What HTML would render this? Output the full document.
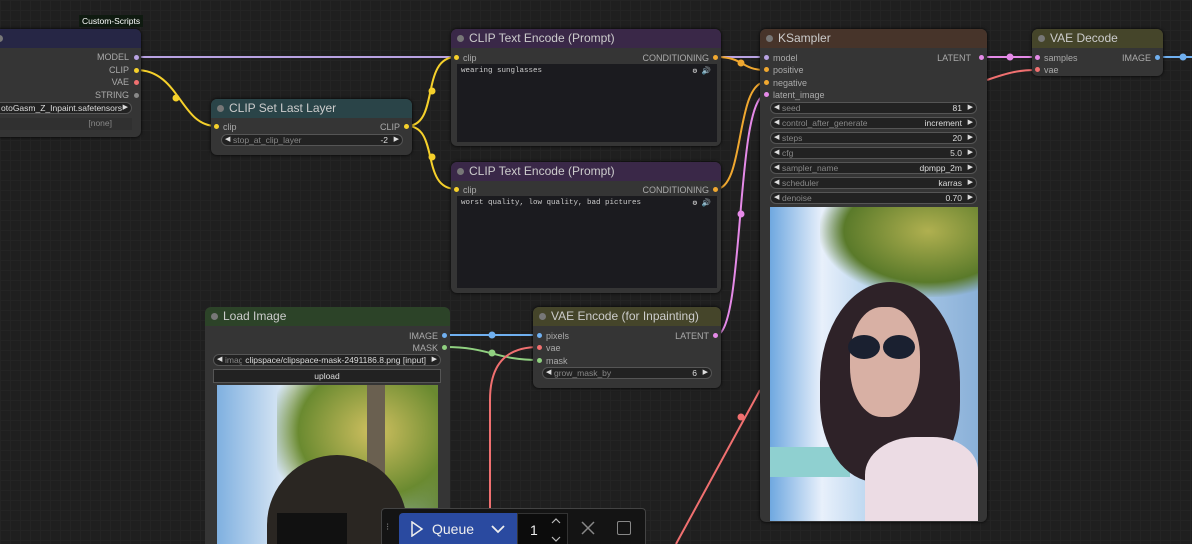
<!DOCTYPE html>
<html style="width:1192px;height:544px;overflow:hidden"><head><meta charset="utf-8"><style>
*{box-sizing:border-box;margin:0;padding:0}
body{width:1192px;height:544px;overflow:hidden;background:#1f1f1f;font-family:"Liberation Sans",sans-serif;position:relative;
background-image:linear-gradient(#242424 1px,transparent 1px),linear-gradient(90deg,#242424 1px,transparent 1px);background-size:10px 10px}
.n{position:absolute;background:#353535;border-radius:6px;box-shadow:0 0 3px #000;}
.t{height:19px;border-radius:6px 6px 0 0;color:#ccc;font-size:12px;line-height:19px;padding-left:18px;position:relative}
.t:before{content:"";position:absolute;left:6px;top:6px;width:7px;height:7px;border-radius:50%;background:#777}
.s{position:absolute;font-size:9px;color:#aaa;line-height:10px}
.d{position:absolute;width:5px;height:5px;border-radius:50%}
.w{position:absolute;height:12px;border-radius:6px;background:#222;border:1px solid #555;font-size:8.5px;color:#888;line-height:10px;padding:0 14px 0 11px;white-space:nowrap;overflow:hidden}
.w:before{content:"◀";position:absolute;left:3px;top:0;color:#ddd;font-size:7px}
.w:after{content:"▶";position:absolute;right:3px;top:0;color:#ddd;font-size:7px}
.w b{position:absolute;right:14px;top:0;color:#ddd;font-weight:normal;background:#222;padding-left:3px}
.ta{position:absolute;background:#1b1b1f;font-family:"Liberation Mono",monospace;font-size:7.5px;color:#ccc;padding:3px 4px}
</style></head><body>
<svg width="1192" height="544" style="position:absolute;left:0;top:0;display:block" fill="none" stroke-width="2">
<path d="M136 57 L760 57" stroke="#b9a3e3"/>
<path d="M136 70 C180 70 180 126 216 126" stroke="#f5d02b"/><circle cx="176" cy="98" r="3.5" fill="#f5d02b"/>
<path d="M407 126 C440 126 420 57 456 57" stroke="#f5d02b"/><circle cx="432" cy="91" r="3.5" fill="#f5d02b"/>
<path d="M407 126 C440 126 420 189 456 189" stroke="#f5d02b"/><circle cx="432" cy="157" r="3.5" fill="#f5d02b"/>
<path d="M716 57 C745 57 740 70 766 70" stroke="#f0a830"/><circle cx="741" cy="63" r="3.5" fill="#f0a830"/>
<path d="M716 189 C745 189 735 82 766 82" stroke="#f0a830"/>
<path d="M716 335 C745 335 735 95 766 95" stroke="#e58ae8"/><circle cx="741" cy="214" r="3.5" fill="#e58ae8"/>
<path d="M982 57 L1037 57" stroke="#e58ae8"/><circle cx="1010" cy="57" r="3.5" fill="#e58ae8"/>
<path d="M987 80 C1010 72 1020 70 1037 70" stroke="#f07070"/>
<path d="M1158 57 L1192 57" stroke="#70b0f0"/><circle cx="1183" cy="57" r="3.5" fill="#70b0f0"/>
<path d="M445 335 L539 335" stroke="#70b0f0"/><circle cx="492" cy="335" r="3.5" fill="#70b0f0"/>
<path d="M445 347 C490 347 495 360 539 360" stroke="#90d080"/><circle cx="492" cy="353" r="3.5" fill="#90d080"/>
<path d="M490 544 L490 400 C490 360 510 347 539 347" stroke="#f07070"/>
<path d="M676 544 L760 390" stroke="#f07070"/><circle cx="741" cy="417" r="3.5" fill="#f07070"/>
</svg>
<div style="position:absolute;left:79px;top:15px;background:#0f1a10;color:#fff;font-size:8.5px;padding:1px 3px">Custom-Scripts</div>
<div class="n" style="left:-10px;top:29px;width:151px;height:108px">
<div class="t" style="background:#262645"></div>
<div class="s" style="right:12px;top:23px">MODEL</div><div class="d" style="right:2px;top:26px;background:#b9a3e3"></div>
<div class="s" style="right:12px;top:36px">CLIP</div><div class="d" style="right:2px;top:39px;background:#f5d02b"></div>
<div class="s" style="right:12px;top:48px">VAE</div><div class="d" style="right:2px;top:51px;background:#f07070"></div>
<div class="s" style="right:12px;top:61px">STRING</div><div class="d" style="right:2px;top:64px;background:#888"></div>
<div class="w" style="left:0;top:73px;width:142px;color:#ddd;padding-left:10px">otoGasm_Z_Inpaint.safetensors</div>
<div style="position:absolute;left:0;top:89px;width:142px;height:12px;background:#303030;color:#888;font-size:8.5px;text-align:right;padding-right:20px">[none]</div>
</div>
<div class="n" style="left:211px;top:99px;width:201px;height:56px">
<div class="t" style="background:#2a4448">CLIP Set Last Layer</div>
<div class="d" style="left:3px;top:25px;background:#f5d02b"></div><div class="s" style="left:12px;top:23px">clip</div>
<div class="s" style="right:12px;top:23px">CLIP</div><div class="d" style="right:3px;top:25px;background:#f5d02b"></div>
<div class="w" style="left:10px;top:35px;width:182px">stop_at_clip_layer<b>-2</b></div>
</div>
<div class="n" style="left:451px;top:29px;width:270px;height:117px">
<div class="t" style="background:#3a2848">CLIP Text Encode (Prompt)</div>
<div class="d" style="left:3px;top:26px;background:#f5d02b"></div><div class="s" style="left:12px;top:24px">clip</div>
<div class="s" style="right:12px;top:24px">CONDITIONING</div><div class="d" style="right:3px;top:26px;background:#f0a830"></div>
<div class="ta" style="left:6px;top:35px;width:260px;height:78px">wearing sunglasses<span style="position:absolute;right:6px;top:2px;color:#ddd">⚙ 🔊</span></div>
</div>
<div class="n" style="left:451px;top:162px;width:270px;height:131px">
<div class="t" style="background:#3a2848">CLIP Text Encode (Prompt)</div>
<div class="d" style="left:3px;top:25px;background:#f5d02b"></div><div class="s" style="left:12px;top:23px">clip</div>
<div class="s" style="right:12px;top:23px">CONDITIONING</div><div class="d" style="right:3px;top:25px;background:#f0a830"></div>
<div class="ta" style="left:6px;top:34px;width:260px;height:92px">worst quality, low quality, bad pictures<span style="position:absolute;right:6px;top:2px;color:#ddd">⚙ 🔊</span></div>
</div>
<div class="n" style="left:760px;top:29px;width:227px;height:493px">
<div class="t" style="background:#47342a">KSampler</div>
<div class="d" style="left:4px;top:26px;background:#b9a3e3"></div><div class="s" style="left:13px;top:24px">model</div>
<div class="d" style="left:4px;top:38px;background:#f0a830"></div><div class="s" style="left:13px;top:36px">positive</div>
<div class="d" style="left:4px;top:51px;background:#f0a830"></div><div class="s" style="left:13px;top:49px">negative</div>
<div class="d" style="left:4px;top:63px;background:#e58ae8"></div><div class="s" style="left:13px;top:61px">latent_image</div>
<div class="s" style="right:16px;top:24px">LATENT</div><div class="d" style="right:3px;top:26px;background:#e58ae8"></div>
<div class="w" style="left:10px;top:73px;width:207px">seed<b>81</b></div>
<div class="w" style="left:10px;top:88px;width:207px">control_after_generate<b>increment</b></div>
<div class="w" style="left:10px;top:103px;width:207px">steps<b>20</b></div>
<div class="w" style="left:10px;top:118px;width:207px">cfg<b>5.0</b></div>
<div class="w" style="left:10px;top:133px;width:207px">sampler_name<b>dpmpp_2m</b></div>
<div class="w" style="left:10px;top:148px;width:207px">scheduler<b>karras</b></div>
<div class="w" style="left:10px;top:163px;width:207px">denoise<b>0.70</b></div>
<div style="position:absolute;left:10px;top:178px;width:208px;height:314px;overflow:hidden;background:linear-gradient(90deg,#6fa8e0 0%,#e8f0fb 25%,#b8d4ee 50%,#8ab0d8 100%)">
<div style="position:absolute;left:50px;top:-20px;width:180px;height:110px;background:radial-gradient(ellipse at 60% 40%,#b0b050,#5a7a2a 55%,transparent 72%)"></div>
<div style="position:absolute;left:0;top:240px;width:80px;height:30px;background:#8fd0d0"></div>
<div style="position:absolute;left:50px;top:75px;width:140px;height:200px;border-radius:50% 50% 40% 40%;background:#2e2228"></div>
<div style="position:absolute;left:80px;top:100px;width:70px;height:110px;border-radius:45%;background:#d8b0a4"></div>
<div style="position:absolute;left:78px;top:128px;width:32px;height:24px;border-radius:50%;background:#1a2030"></div>
<div style="position:absolute;left:113px;top:128px;width:32px;height:24px;border-radius:50%;background:#1a2030"></div>
<div style="position:absolute;left:95px;top:230px;width:113px;height:84px;border-radius:45% 40% 0 0;background:#ecdce4"></div>
</div>
</div>
<div class="n" style="left:1032px;top:29px;width:131px;height:47px">
<div class="t" style="background:#45452a">VAE Decode</div>
<div class="d" style="left:3px;top:26px;background:#e58ae8"></div><div class="s" style="left:12px;top:24px">samples</div>
<div class="d" style="left:3px;top:38px;background:#f07070"></div><div class="s" style="left:12px;top:36px">vae</div>
<div class="s" style="right:12px;top:24px">IMAGE</div><div class="d" style="right:3px;top:26px;background:#70b0f0"></div>
</div>
<div class="n" style="left:205px;top:307px;width:245px;height:237px;border-radius:6px 6px 0 0;overflow:hidden;box-shadow:none">
<div class="t" style="background:#2c4328">Load Image</div>
<div class="s" style="right:12px;top:24px">IMAGE</div><div class="d" style="right:3px;top:26px;background:#70b0f0"></div>
<div class="s" style="right:12px;top:36px">MASK</div><div class="d" style="right:3px;top:38px;background:#90d080"></div>
<div class="w" style="left:8px;top:47px;width:228px">image<b>clipspace/clipspace-mask-2491186.8.png [input]</b></div>
<div style="position:absolute;left:8px;top:62px;width:228px;height:14px;background:#222;border:1px solid #555;color:#ddd;font-size:8.5px;text-align:center;line-height:12px">upload</div>
<div style="position:absolute;left:12px;top:78px;width:221px;height:159px;overflow:hidden;background:linear-gradient(90deg,#7fb0e0,#e8f0f8 35%,#a8c8e0 60%,#6a8a40)">
<div style="position:absolute;left:60px;top:-10px;width:161px;height:140px;background:radial-gradient(ellipse at 60% 40%,#d0c060,#6a8a30 55%,transparent 78%)"></div>
<div style="position:absolute;left:150px;top:0;width:18px;height:159px;background:#6a6050"></div>
<div style="position:absolute;left:50px;top:70px;width:140px;height:89px;border-radius:70px 70px 0 0;background:#2a2622"></div>
<div style="position:absolute;left:60px;top:128px;width:70px;height:31px;background:#111"></div>
</div>
</div>
<div class="n" style="left:533px;top:307px;width:188px;height:81px">
<div class="t" style="background:#45452a">VAE Encode (for Inpainting)</div>
<div class="d" style="left:4px;top:26px;background:#70b0f0"></div><div class="s" style="left:13px;top:24px">pixels</div>
<div class="d" style="left:4px;top:38px;background:#f07070"></div><div class="s" style="left:13px;top:36px">vae</div>
<div class="d" style="left:4px;top:51px;background:#90d080"></div><div class="s" style="left:13px;top:49px">mask</div>
<div class="s" style="right:12px;top:24px">LATENT</div><div class="d" style="right:3px;top:26px;background:#e58ae8"></div>
<div class="w" style="left:9px;top:60px;width:170px">grow_mask_by<b>6</b></div>
</div>
<div style="position:absolute;left:381px;top:508px;width:265px;height:36px;background:#141414;border:1px solid #444;border-bottom:none;border-radius:4px 4px 0 0;overflow:hidden">
<div style="position:absolute;left:4px;top:14px;color:#777;font-size:10px;line-height:10px">⁝</div>
<div style="position:absolute;left:17px;top:4px;width:118px;height:32px;background:#2a4aa0;border-radius:4px 0 0 0;color:#eee;font-size:14px;line-height:16px">
<svg width="14" height="16" style="position:absolute;left:11px;top:8px" fill="none" stroke="#eee" stroke-width="1.5"><path d="M2 1 L12 8 L2 15 Z"/></svg>
<span style="position:absolute;left:33px;top:8px">Queue</span>
<svg width="14" height="10" style="position:absolute;left:92px;top:11px" fill="none" stroke="#eee" stroke-width="1.8"><path d="M1 2 L7 8 L13 2"/></svg>
</div>
<div style="position:absolute;left:135px;top:4px;width:51px;height:32px;background:#0c0c0c;border:1px solid #333;border-bottom:none;color:#eee;font-size:14px;line-height:16px;overflow:hidden">
<span style="position:absolute;left:12px;top:8px">1</span>
<svg width="10" height="26" style="position:absolute;right:6px;top:3px" fill="none" stroke="#bbb" stroke-width="1.2"><path d="M1 6 L5 2 L9 6 M1 20 L5 24 L9 20"/></svg></div>
<svg width="14" height="14" style="position:absolute;left:199px;top:12px" stroke="#888" stroke-width="1.5"><path d="M1 1 L13 13 M13 1 L1 13"/></svg>
<div style="position:absolute;left:235px;top:12px;width:14px;height:14px;border:1.5px solid #888;border-radius:2px"></div>
</div>
</body></html>
